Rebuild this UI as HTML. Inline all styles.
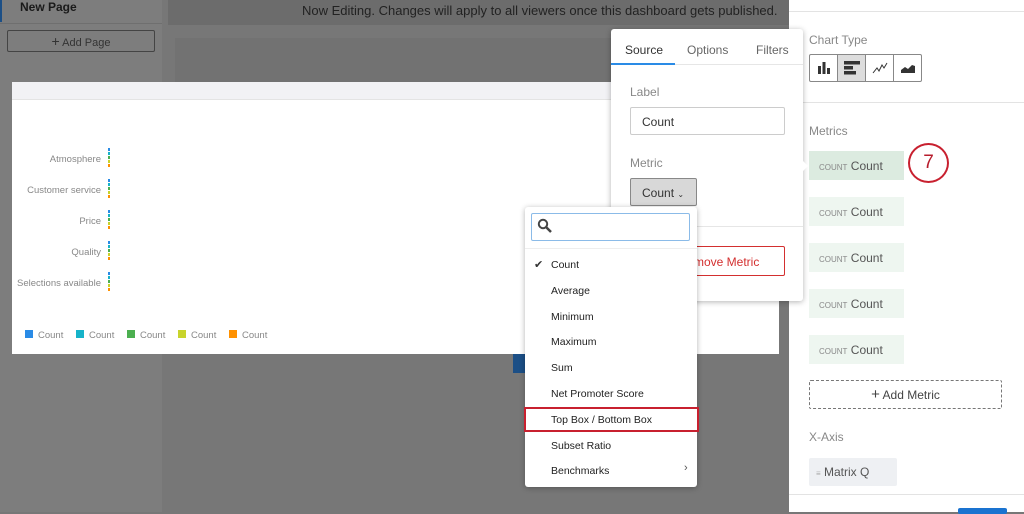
<!DOCTYPE html>
<html><head><style>
*{box-sizing:border-box;margin:0;padding:0}
body{width:1024px;height:512px;overflow:hidden;background:#777;font-family:"Liberation Sans",sans-serif;position:relative}
.a{position:absolute}
.t{font-size:11px;color:#777}
</style></head><body>
<div class="a" style="left:0;top:0;width:162px;height:512px;background:#7d7d7d"></div>
<div class="a" style="left:0;top:0;width:2px;height:22px;background:#1c4f86"></div>
<div class="a" style="left:20px;top:0;font-size:12px;font-weight:bold;color:#1a1a1a">New Page</div>
<div class="a" style="left:0;top:23px;width:162px;height:1px;background:#6f6f6f"></div>
<div class="a" style="left:7px;top:30px;width:148px;height:22px;border:1px solid #444;border-radius:2px;font-size:11px;color:#333;text-align:center;line-height:20px"><b style="font-size:14px;font-weight:normal">+</b> Add Page</div>
<div class="a" style="left:168px;top:0;width:621px;height:25px;background:#6c6c6c"></div>
<div class="a" style="left:302px;top:3px;font-size:13px;color:#222;white-space:nowrap">Now Editing. Changes will apply to all viewers once this dashboard gets published.</div>
<div class="a" style="left:175px;top:38px;width:436px;height:44px;background:#727272"></div>

<div class="a" style="left:12px;top:82px;width:767px;height:272px;background:#fff"></div>
<div class="a" style="left:12px;top:82px;width:767px;height:18px;background:#f2f2f5;border-bottom:1px solid #e4e4e4"></div>
<div class="a t" style="right:923px;top:154px;font-size:9.5px;color:#888">Atmosphere</div>
<div class="a t" style="right:923px;top:185px;font-size:9.5px;color:#888">Customer service</div>
<div class="a t" style="right:923px;top:216px;font-size:9.5px;color:#888">Price</div>
<div class="a t" style="right:923px;top:247px;font-size:9.5px;color:#888">Quality</div>
<div class="a t" style="right:923px;top:278px;font-size:9.5px;color:#888">Selections available</div>
<div class="a" style="left:108px;top:148px;width:2px;height:148px;background:repeating-linear-gradient(#2a8be6 0 3px,#fff 3px 4px,#17b3c9 4px 7px,#fff 7px 8px,#4caf50 8px 11px,#fff 11px 12px,#c8d42c 12px 15px,#fff 15px 16px,#ff9100 16px 19px,#fff 19px 20px,#fff 20px 31px)"></div>
<div class="a" style="left:25px;top:330px;font-size:9.5px;color:#888;display:flex;gap:0">
<span style="width:51px"><i style="display:inline-block;width:8px;height:8px;background:#2a8be6;margin-right:5px"></i>Count</span>
<span style="width:51px"><i style="display:inline-block;width:8px;height:8px;background:#17b3c9;margin-right:5px"></i>Count</span>
<span style="width:51px"><i style="display:inline-block;width:8px;height:8px;background:#4caf50;margin-right:5px"></i>Count</span>
<span style="width:51px"><i style="display:inline-block;width:8px;height:8px;background:#c8d42c;margin-right:5px"></i>Count</span>
<span><i style="display:inline-block;width:8px;height:8px;background:#ff9100;margin-right:5px"></i>Count</span></div>
<div class="a" style="left:513px;top:354px;width:14px;height:19px;background:#1c4f86"></div>

<!-- right panel -->
<div class="a" style="left:789px;top:0;width:235px;height:512px;background:#fff"></div>
<div class="a" style="left:789px;top:11px;width:235px;height:1px;background:#e3e3e3"></div>
<div class="a" style="left:809px;top:33px;font-size:12px;color:#888">Chart Type</div>
<div class="a" style="left:809px;top:54px;width:113px;height:28px;border:1px solid #888;border-radius:2px;display:flex">
<div style="width:28px;border-right:1px solid #888;display:flex;align-items:center;justify-content:center"><svg width="14" height="12"><rect x="1" y="4" width="3" height="8" fill="#333"/><rect x="5.5" y="0" width="3" height="12" fill="#333"/><rect x="10" y="6" width="3" height="6" fill="#333"/></svg></div>
<div style="width:28px;border-right:1px solid #888;background:#ddd;display:flex;align-items:center;justify-content:center"><svg width="18" height="16"><rect x="1" y="1" width="16" height="3.5" fill="#333"/><rect x="1" y="6" width="9" height="3.5" fill="#333"/><rect x="1" y="11" width="12" height="3.5" fill="#333"/></svg></div>
<div style="width:28px;border-right:1px solid #888;display:flex;align-items:center;justify-content:center"><svg width="16" height="12"><path d="M1 11l4-5 2 3 3-6 2 3 3-5" fill="none" stroke="#333" stroke-width="1"/></svg></div>
<div style="flex:1;display:flex;align-items:center;justify-content:center"><svg width="16" height="12"><path d="M1 11V8l4-3 3 2 4-4 3 1v7z" fill="#333"/></svg></div></div>
<div class="a" style="left:789px;top:102px;width:235px;height:1px;background:#e3e3e3"></div>
<div class="a" style="left:809px;top:124px;font-size:12px;color:#888">Metrics</div>
<div class="a" style="left:809px;top:151px;width:95px;height:29px;background:#dcebe0;padding:8px 10px;font-size:12px;color:#555"><span style="font-size:8px;color:#888">COUNT</span> Count</div>
<div class="a" style="left:809px;top:197px;width:95px;height:29px;background:#eef6f0;padding:8px 10px;font-size:12px;color:#555"><span style="font-size:8px;color:#888">COUNT</span> Count</div>
<div class="a" style="left:809px;top:243px;width:95px;height:29px;background:#eef6f0;padding:8px 10px;font-size:12px;color:#555"><span style="font-size:8px;color:#888">COUNT</span> Count</div>
<div class="a" style="left:809px;top:289px;width:95px;height:29px;background:#eef6f0;padding:8px 10px;font-size:12px;color:#555"><span style="font-size:8px;color:#888">COUNT</span> Count</div>
<div class="a" style="left:809px;top:335px;width:95px;height:29px;background:#eef6f0;padding:8px 10px;font-size:12px;color:#555"><span style="font-size:8px;color:#888">COUNT</span> Count</div>
<div class="a" style="left:908px;top:143px;width:41px;height:40px;border:2.5px solid #c8202f;border-radius:50%;text-align:center;font-size:19px;line-height:35px;color:#b71c2c">7</div>
<div class="a" style="left:809px;top:380px;width:193px;height:29px;border:1px dashed #777;border-radius:2px;text-align:center;font-size:12px;color:#444;line-height:27px"><b style="font-size:15px;font-weight:normal">+</b> Add Metric</div>
<div class="a" style="left:809px;top:430px;font-size:12px;color:#888">X-Axis</div>
<div class="a" style="left:809px;top:458px;width:88px;height:28px;background:#eef0f3;border-radius:2px;padding:7px 7px;font-size:12px;color:#555"><span style="font-size:8px;color:#aaa">&#8801;</span> Matrix Q</div>
<div class="a" style="left:789px;top:494px;width:235px;height:1px;background:#e3e3e3"></div>
<div class="a" style="left:958px;top:508px;width:49px;height:6px;background:#1a73d0;border-radius:2px"></div>

<!-- popup -->
<div class="a" style="left:611px;top:29px;width:192px;height:272px;background:#fff;border-radius:3px;box-shadow:0 1px 6px rgba(0,0,0,.3)"></div>
<div class="a" style="left:625px;top:43px;font-size:12px;color:#333">Source</div>
<div class="a" style="left:687px;top:43px;font-size:12px;color:#666">Options</div>
<div class="a" style="left:756px;top:43px;font-size:12px;color:#666">Filters</div>
<div class="a" style="left:611px;top:64px;width:192px;height:1px;background:#e6e6e6"></div>
<div class="a" style="left:611px;top:63px;width:64px;height:2px;background:#2a8be6"></div>
<div class="a" style="left:630px;top:85px;font-size:12px;color:#888">Label</div>
<div class="a" style="left:630px;top:107px;width:155px;height:28px;border:1px solid #ccc;border-radius:2px;font-size:12px;color:#333;padding:7px 11px">Count</div>
<div class="a" style="left:630px;top:156px;font-size:12px;color:#888">Metric</div>
<div class="a" style="left:630px;top:178px;width:67px;height:28px;border:1px solid #888;border-radius:2px;background:#d8d8d8;font-size:12px;color:#333;padding:7px 11px">Count <span style="font-size:8px">&#8964;</span></div>
<div class="a" style="left:611px;top:226px;width:192px;height:1px;background:#e6e6e6"></div>
<div class="a" style="left:660px;top:246px;width:125px;height:30px;border:1px solid #d32f2f;border-radius:2px;font-size:12px;color:#d32f2f;padding:8px 0 0 33px">move Metric</div>
<div class="a" style="left:803px;top:161px;width:0;height:0;border:5px solid transparent;border-left-color:#fff;border-right:0"></div>

<!-- dropdown -->
<div class="a" style="left:525px;top:207px;width:172px;height:280px;background:#fff;border-radius:3px;box-shadow:0 1px 6px rgba(0,0,0,.3)"></div>
<div class="a" style="left:531px;top:213px;width:159px;height:28px;border:1px solid #8bbbe8;border-radius:2px"></div>
<svg class="a" style="left:537px;top:218px" width="16" height="16" viewBox="0 0 16 16"><circle cx="6" cy="6" r="4.2" fill="none" stroke="#444" stroke-width="2"/><path d="M9 9l5 5" stroke="#444" stroke-width="2.5"/></svg>
<div class="a" style="left:525px;top:248px;width:172px;height:1px;background:#eee"></div>
<div class="a" style="left:534px;top:258px;font-size:11px;color:#333">&#10004;</div>
<div class="a" style="left:551px;top:253px;font-size:10.5px;color:#222;line-height:25.8px">Count<br>Average<br>Minimum<br>Maximum<br>Sum<br>Net Promoter Score<br>Top Box / Bottom Box<br>Subset Ratio<br>Benchmarks</div>
<div class="a" style="left:684px;top:462px;font-size:11px;color:#555">&#8250;</div>
<div class="a" style="left:524px;top:407px;width:175px;height:25px;border:2px solid #c8202f"></div>
</body></html>
